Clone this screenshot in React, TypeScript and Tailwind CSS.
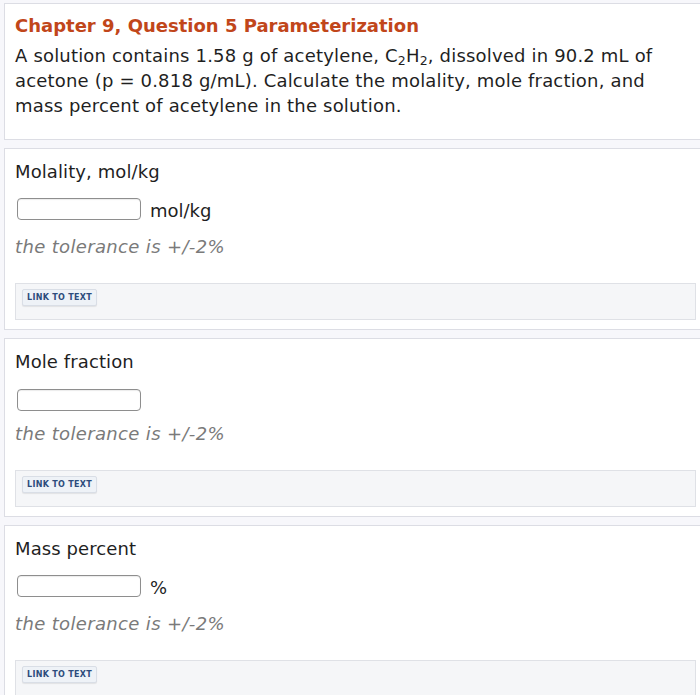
import React from "react";

const font = { fontFamily: '"DejaVu Sans", Verdana, sans-serif' };

function LinkBox() {
  return (
    <div className="mt-[24px] flex h-[37px] items-start border border-[#dfe1e6] bg-[#f5f6f8] pl-[6px] pt-[5px]">
      <div className="flex h-[17px] items-center rounded-[2px] border border-[#d9dee6] bg-[#eef2f7] px-[4px] text-[8px] font-bold leading-[10px] tracking-[0.3px] text-[#2d4c7c] shadow-[0_1px_1px_rgba(0,0,0,0.08)]">
        LINK TO TEXT
      </div>
    </div>
  );
}

function Part({ title, unit }: { title: string; unit?: string }) {
  return (
    <div className="mt-[8px] w-[703px] border border-[#dcdde4] bg-white px-[10px] pt-[10px] pb-[9px]">
      <div className="h-[25px] text-[18px] leading-[25px] tracking-[0.1px] text-[#1f1f1f]">{title}</div>
      <div className={`flex ${unit ? "mt-[14px] h-[25px]" : "mt-[15px] h-[22px]"} items-start`}>
        <div className="ml-[2px] h-[22px] w-[124px] rounded-[4px] border border-[#8e8e8e] bg-white shadow-[inset_0_1px_1px_rgba(0,0,0,0.08)]" />
        {unit && (
          <span className="ml-[9px] mt-[0px] text-[18px] leading-[25px] text-[#1f1f1f]">{unit}</span>
        )}
      </div>
      <div className={`${unit ? "mt-[11px]" : "mt-[10px]"} h-[25px] text-[18px] italic leading-[25px] tracking-[0.35px] text-[#7a7a7a]`}>
        the tolerance is +/-2%
      </div>
      <LinkBox />
    </div>
  );
}

export default function App() {
  return (
    <div className="h-[695px] w-[700px] overflow-hidden bg-[#f7f7fb] pl-[4px] pt-[3px]" style={font}>
      <div className="w-[703px] border border-[#dcdde4] bg-white px-[10px] pt-[9px] pb-[21px]">
        <div className="text-[18px] font-bold leading-[25px] text-[#c1461a]">
          Chapter 9, Question 5 Parameterization
        </div>
        <div className="mt-[5px] text-[18px] leading-[25px] tracking-[0.18px] text-[#1f1f1f]">
          A solution contains 1.58 g of acetylene, C<sub className="text-[12.5px]">2</sub>H<sub className="text-[12.5px]">2</sub>, dissolved in 90.2 mL of
          <br />
          acetone (p = 0.818 g/mL). Calculate the molality, mole fraction, and
          <br />
          mass percent of acetylene in the solution.
        </div>
      </div>
      <Part title="Molality, mol/kg" unit="mol/kg" />
      <Part title="Mole fraction" />
      <Part title="Mass percent" unit="%" />
    </div>
  );
}
